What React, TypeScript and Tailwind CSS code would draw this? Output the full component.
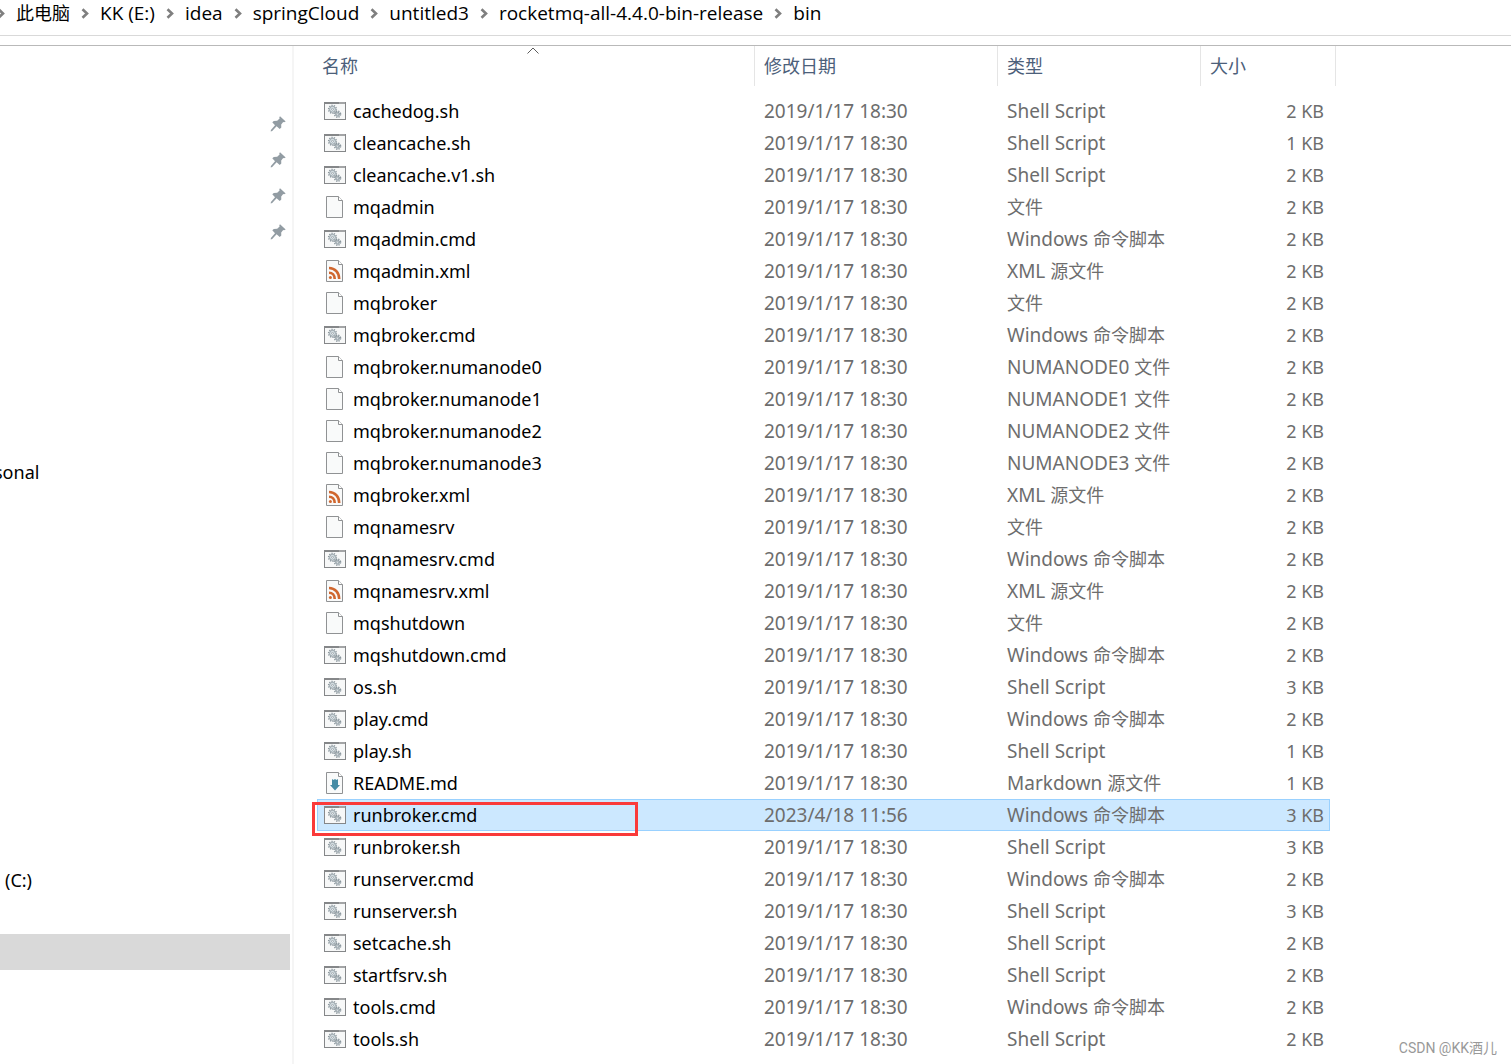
import React from "react";

type Kind = "script" | "file" | "xml" | "md";
type Entry = {
  name: string;
  kind: Kind;
  latin: string;
  cjk?: string;
  size: string;
  date?: string;
  selected?: boolean;
};

const shell = (name: string, size: string): Entry => ({ name, kind: "script", latin: "Shell Script", size });
const cmd = (name: string, size: string): Entry => ({ name, kind: "script", latin: "Windows ", cjk: "命令脚本", size });
const xml = (name: string): Entry => ({ name, kind: "xml", latin: "XML ", cjk: "源文件", size: "2 KB" });
const plain = (name: string, latin = ""): Entry => ({ name, kind: "file", latin, cjk: "文件", size: "2 KB" });

const entries: Entry[] = [
  shell("cachedog.sh", "2 KB"),
  shell("cleancache.sh", "1 KB"),
  shell("cleancache.v1.sh", "2 KB"),
  plain("mqadmin"),
  cmd("mqadmin.cmd", "2 KB"),
  xml("mqadmin.xml"),
  plain("mqbroker"),
  cmd("mqbroker.cmd", "2 KB"),
  plain("mqbroker.numanode0", "NUMANODE0 "),
  plain("mqbroker.numanode1", "NUMANODE1 "),
  plain("mqbroker.numanode2", "NUMANODE2 "),
  plain("mqbroker.numanode3", "NUMANODE3 "),
  xml("mqbroker.xml"),
  plain("mqnamesrv"),
  cmd("mqnamesrv.cmd", "2 KB"),
  xml("mqnamesrv.xml"),
  plain("mqshutdown"),
  cmd("mqshutdown.cmd", "2 KB"),
  shell("os.sh", "3 KB"),
  cmd("play.cmd", "2 KB"),
  shell("play.sh", "1 KB"),
  { name: "README.md", kind: "md", latin: "Markdown ", cjk: "源文件", size: "1 KB" },
  { ...cmd("runbroker.cmd", "3 KB"), date: "2023/4/18 11:56", selected: true },
  shell("runbroker.sh", "3 KB"),
  cmd("runserver.cmd", "2 KB"),
  shell("runserver.sh", "3 KB"),
  shell("setcache.sh", "2 KB"),
  shell("startfsrv.sh", "2 KB"),
  cmd("tools.cmd", "2 KB"),
  shell("tools.sh", "2 KB"),
];

function Gear({ cx, cy, r }: { cx: number; cy: number; r: number }) {
  return (
    <g fill="none" stroke="#8b979e">
      <circle cx={cx} cy={cy} r={r} strokeWidth="1.4" strokeDasharray="1.3 1.1" />
      <circle cx={cx} cy={cy} r={r - 1} fill="#dfe8ec" strokeWidth="0.9" />
      <circle cx={cx} cy={cy} r="1" fill="#fff" strokeWidth="0.8" />
    </g>
  );
}

function FileIcon({ kind }: { kind: Kind }) {
  if (kind === "script") {
    return (
      <svg width="22" height="18" viewBox="0 0 22 18" aria-hidden="true" className="shrink-0">
        <rect x="0.5" y="0.5" width="21" height="17" fill="#f7f8f8" stroke="#858789" />
        <rect x="0" y="0" width="22" height="2" fill="#858789" />
        <path d="M15.5 1h1M17.5 1h1M19.5 1h1" stroke="#fff" />
        <Gear cx={8.5} cy={7.3} r={3.9} />
        <Gear cx={13.6} cy={12.2} r={3} />
      </svg>
    );
  }
  return (
    <svg width="22" height="22" viewBox="0 0 22 22" aria-hidden="true" className="shrink-0">
      <path d="M2.5 0.5h12l4 4v17h-16z" fill="#f9fafa" stroke="#909294" />
      <path d="M14.5 0.5v4h4" fill="#fff" stroke="#909294" />
      {kind === "xml" && (
        <g fill="none" stroke="#d0672f" strokeWidth="2.6">
          <path d="M5 8c6 0 10.200 4.600 10.200 11" />
          <path d="M5 12.700c3.300 0 5.700 2.600 5.700 6.300" />
          <circle cx="6.400" cy="17.500" r="1.500" fill="#d0672f" stroke="none" />
        </g>
      )}
      {kind === "md" && (
        <path d="M8 7l1.500 1 1.500-1 1.500 1L14 7v6h2l-5 5.500L6 13h2z" fill="#468ca5" />
      )}
    </svg>
  );
}

function Chevron() {
  return (
    <svg width="8" height="11" viewBox="0 0 8 11" aria-hidden="true" className="shrink-0">
      <path d="M1.500 1.200L6 5.500L1.500 9.800" fill="none" stroke="#7f7f7f" strokeWidth="2.600" />
    </svg>
  );
}

function Pin() {
  return (
    <svg width="16" height="16" viewBox="0 0 16 16" aria-hidden="true">
      <path
        d="M10 0.300L15.700 5.400L14 6.300L13.200 6L11.200 8.600L11.300 11.600L9.700 13L6.600 10.300L2.200 15L0.700 15.600L0.900 14L5 9.200L2.300 6.300L3.800 5L7.200 4.700L9.600 2.400L9.300 1.300Z"
        fill="#929ca3"
      />
    </svg>
  );
}

const crumbs = ["KK (E:)", "idea", "springCloud", "untitled3", "rocketmq-all-4.4.0-bin-release", "bin"];
const pins = ["固定项目 1", "固定项目 2", "固定项目 3", "固定项目 4"];

function HeaderCell({ label, span, sorted }: { label: string; span?: number; sorted?: boolean }) {
  return (
    <th scope="col" colSpan={span} className="p-0 pb-[9px] font-normal" aria-sort={sorted ? "ascending" : undefined}>
      <button
        type="button"
        className={
          "relative block h-10 w-full border-r border-[#e5e5e5] text-left text-lg leading-10 text-[#4c607a] " +
          (sorted ? "pl-[10px]" : "pl-[9px]")
        }
      >
        {label}
        {sorted && (
          <svg width="12" height="7" viewBox="0 0 12 7" aria-hidden="true" className="absolute inset-x-0 top-px mx-auto">
            <path d="M0.500 6.500L6 1l5.500 5.500" fill="none" stroke="#5c5c5c" />
          </svg>
        )}
      </button>
    </th>
  );
}

export default function App() {
  return (
    <div className="relative flex min-h-screen flex-col overflow-hidden bg-white font-['Noto_Sans','Noto_Sans_CJK_SC',sans-serif] text-[19px] text-black">
      <nav
        aria-label="路径"
        className="flex h-9 items-center gap-[11px] border-b border-[#d9d9d9] pb-[9px] font-['Open_Sans','Noto_Sans_CJK_SC',sans-serif] whitespace-nowrap"
      >
        <div className="-ml-[3px] flex">
          <Chevron />
        </div>
        <button type="button" className="text-lg leading-6">此电脑</button>
        {crumbs.map((c) => (
          <React.Fragment key={c}>
            <Chevron />
            <button type="button" className="leading-6">{c}</button>
          </React.Fragment>
        ))}
      </nav>

      <div className="mt-[9px] flex grow border-t border-[#b9b9b9]">
        <aside className="w-[294px] shrink-0 border-r-2 border-[#f5f5f5] pt-[60px] pr-[2px] text-lg">
          {pins.map((p) => (
            <button key={p} type="button" aria-label={p} className="flex h-9 w-full items-center justify-end pr-1">
              <Pin />
            </button>
          ))}
          <button type="button" className="mt-[204px] flex h-9 w-full items-center">
            <span className="-ml-1.5">sonal</span>
          </button>
          <button type="button" className="mt-[372px] flex h-9 w-full items-center pl-[5px]">(C:)</button>
          <button type="button" aria-label="当前位置" className="mt-9 block h-9 w-full bg-[#d9d9d9]" />
        </aside>

        <main className="min-w-0 grow pl-[18px]">
          <table className="w-[1024px] table-fixed border-separate border-spacing-0">
            <colgroup>
              <col className="w-[5px]" />
              <col className="w-[438px]" />
              <col className="w-[243px]" />
              <col className="w-[203px]" />
              <col className="w-[129px]" />
              <col className="w-[6px]" />
            </colgroup>
            <thead>
              <tr>
                <HeaderCell label="名称" span={2} sorted />
                <HeaderCell label="修改日期" />
                <HeaderCell label="类型" />
                <HeaderCell label="大小" span={2} />
              </tr>
            </thead>
            <tbody className="whitespace-nowrap text-[#6d6d6d]">
              {entries.map((e) => {
                const edge = e.selected ? "border-y border-[#99d1ff] bg-[#cce8ff] leading-[30px] " : "leading-8 ";
                return (
                  <tr key={e.name} className="h-8" aria-selected={e.selected}>
                    <td className="p-0" />
                    <td className={edge + "relative p-0 text-lg text-black" + (e.selected ? " border-l" : "")}>
                      <div
                        className={
                          "flex items-center gap-[7px] " + (e.selected ? "pl-[6px] leading-[30px]" : "pl-[7px] leading-8")
                        }
                      >
                        <FileIcon kind={e.kind} />
                        <span>{e.name}</span>
                      </div>
                      {e.selected && (
                        <div className="pointer-events-none absolute top-[2px] -left-[6px] h-[34px] w-[326px] border-3 border-[#fa3a3a]" />
                      )}
                    </td>
                    <td className={edge + "p-0 pl-[9px]"}>{e.date ?? "2019/1/17 18:30"}</td>
                    <td className={edge + "p-0 pl-[9px]"}>
                      {e.latin}
                      <span className="text-lg leading-none">{e.cjk}</span>
                    </td>
                    <td
                      className={edge + "p-0 text-right text-lg " + (e.selected ? "border-r pr-[5px]" : "pr-[6px]")}
                    >
                      {e.size}
                    </td>
                    <td className="p-0" />
                  </tr>
                );
              })}
            </tbody>
          </table>
        </main>
      </div>

      <div className="absolute right-[14px] bottom-[6px] font-['Roboto','Noto_Sans_CJK_SC',sans-serif] text-sm text-[#999999]">
        CSDN @KK酒儿
      </div>
    </div>
  );
}
